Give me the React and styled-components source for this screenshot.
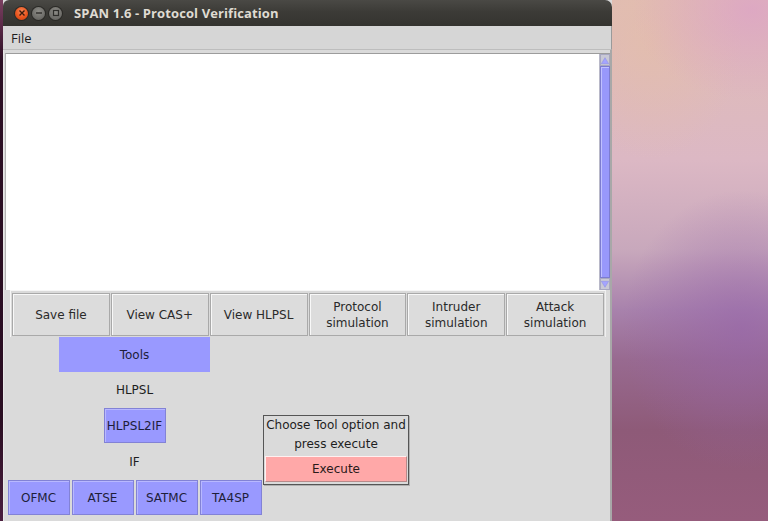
import React from "react";
import styled, { createGlobalStyle } from "styled-components";

const GlobalStyle = createGlobalStyle`
  html, body {
    margin: 0;
    padding: 0;
    background: #2c0f24;
  }
  * {
    box-sizing: border-box;
  }
`;

function TitleButton(props) {
  return (
    <CircleButton kind={props.kind}>
      <svg width="8" height="8" viewBox="0 0 8 8">
        {props.kind === "close" && (
          <path d="M1.5 1.5 L6.5 6.5 M6.5 1.5 L1.5 6.5" stroke="#3a1a0c" strokeWidth="1.4" />
        )}
        {props.kind === "min" && (
          <path d="M1 4 H7" stroke="#2e2d2a" strokeWidth="1.4" />
        )}
        {props.kind === "max" && (
          <rect x="1.5" y="1.5" width="5" height="5" fill="none" stroke="#2e2d2a" strokeWidth="1.2" />
        )}
      </svg>
    </CircleButton>
  );
}

function ScrollArrow(props) {
  return (
    <ArrowBox>
      <svg width="10" height="9" viewBox="0 0 10 9">
        {props.up ? (
          <path d="M5 1 L9.5 8.5 H0.5 Z" fill="#a4a4ff" stroke="#8a8ae0" strokeWidth="0.6" />
        ) : (
          <path d="M5 8 L9.5 0.5 H0.5 Z" fill="#a4a4ff" stroke="#8a8ae0" strokeWidth="0.6" />
        )}
      </svg>
    </ArrowBox>
  );
}

const tabs = [
  ["Save file"],
  ["View CAS+"],
  ["View HLPSL"],
  ["Protocol", "simulation"],
  ["Intruder", "simulation"],
  ["Attack", "simulation"],
];

const backends = ["OFMC", "ATSE", "SATMC", "TA4SP"];

export default function App() {
  return (
    <Page>
      <GlobalStyle />
      <LeftEdge />
      <Window>
        <TitleBar>
          <TitleButtons>
            <TitleButton kind="close" />
            <TitleButton kind="min" />
            <TitleButton kind="max" />
          </TitleButtons>
          <TitleText>SPAN 1.6 - Protocol Verification</TitleText>
        </TitleBar>
        <MenuBar>
          <MenuItem>File</MenuItem>
        </MenuBar>
        <Body>
          <Editor>
            <TextArea />
            <ScrollBar>
              <ScrollArrow up />
              <Thumb />
              <ScrollArrow />
            </ScrollBar>
          </Editor>
          <TabRow>
            {tabs.map((lines) => (
              <TabButton key={lines.join(" ")}>
                {lines.map((l) => (
                  <span key={l}>{l}</span>
                ))}
              </TabButton>
            ))}
          </TabRow>
          <Lower>
            <ToolColumn>
              <ToolsBox>Tools</ToolsBox>
              <Label height={36}>HLPSL</Label>
              <ToolButton>HLPSL2IF</ToolButton>
              <Label height={37}>IF</Label>
              <BackendRow>
                {backends.map((b) => (
                  <ToolButton key={b}>{b}</ToolButton>
                ))}
              </BackendRow>
            </ToolColumn>
            <InfoBox>
              <InfoLine>Choose Tool option and</InfoLine>
              <InfoLine>press execute</InfoLine>
              <ExecuteButton>Execute</ExecuteButton>
            </InfoBox>
          </Lower>
        </Body>
      </Window>
      <Desktop />
    </Page>
  );
}

const Page = styled.div`
  display: flex;
  width: 768px;
  height: 521px;
  overflow: hidden;
  font-family: "DejaVu Sans", "Liberation Sans", sans-serif;
  font-size: 12px;
  color: #222;
`;

const LeftEdge = styled.div`
  width: 3px;
  flex: none;
  background: linear-gradient(180deg, #7a4060 0px, #5a2a48 26px, #2c0f24 60px, #2a0e22 420px, #4a1e3e 521px);
`;

const Window = styled.div`
  width: 609px;
  flex: none;
  display: flex;
  flex-direction: column;
  background: #dadada;
`;

const TitleBar = styled.div`
  height: 26px;
  display: flex;
  align-items: center;
  padding-left: 12px;
  background: linear-gradient(180deg, #4a4945 0%, #3c3b37 45%, #34332f 100%);
  border-radius: 6px 7px 0 0;
`;

const TitleButtons = styled.div`
  display: flex;
  gap: 4px;
  margin-right: 12px;
`;

const CircleButton = styled.span`
  width: 13px;
  height: 13px;
  border-radius: 50%;
  display: flex;
  align-items: center;
  justify-content: center;
  background: ${(p) =>
    p.kind === "close"
      ? "radial-gradient(circle at 50% 35%, #f78a5a 0%, #e9541d 55%, #c5400f 100%)"
      : "radial-gradient(circle at 50% 35%, #8d8c87 0%, #6f6e6a 60%, #5a5955 100%)"};
  box-shadow: 0 0 0 1px #2a2926;
`;

const TitleText = styled.span`
  font-family: "Open Sans", "Liberation Sans", sans-serif;
  font-weight: 700;
  font-size: 13px;
  color: #dfdbd2;
  letter-spacing: 0.1px;
`;

const MenuBar = styled.div`
  height: 24px;
  display: flex;
  align-items: center;
  padding-left: 8px;
  background: #d6d6d6;
  border-bottom: 1px solid #bdbdbd;
  border-right: 1px solid #9a9a9a;
`;

const MenuItem = styled.span`
  font-family: "Open Sans", "DejaVu Sans", sans-serif;
  font-size: 13px;
  color: #1e1e1e;
`;

const Body = styled.div`
  flex: 1;
  display: flex;
  flex-direction: column;
  border-right: 2px solid #a8a8a8;
  border-left: 1px solid #e8e8e8;
`;

const Editor = styled.div`
  display: flex;
  height: 237px;
  margin: 3px 0 0 1px;
  border-top: 1px solid #9c9c9c;
  border-left: 1px solid #b4b4b4;
`;

const TextArea = styled.div`
  flex: 1;
  background: #ffffff;
`;

const ScrollBar = styled.div`
  width: 11px;
  display: flex;
  flex-direction: column;
  background: #c8c8d4;
  border-left: 1px solid #b8b8c8;
`;

const ArrowBox = styled.div`
  height: 12px;
  display: flex;
  align-items: center;
  justify-content: center;
  background: #c9c9d6;
  border: 1px solid #a8a8c0;
`;

const Thumb = styled.div`
  flex: 1;
  background: #9898fb;
  border: 1px solid #7c7cd0;
  box-shadow: inset 1px 1px 0 #c0c0ff;
`;

const TabRow = styled.div`
  display: grid;
  grid-template-columns: repeat(6, 1fr);
  gap: 1px;
  margin: 0 4px 0 6px;
  padding: 2px 1px 1px 1px;
  border-top: 1px solid #f6f6f6;
  border-left: 1px solid #f6f6f6;
  border-right: 1px solid #f0f0f0;
`;

const TabButton = styled.div`
  height: 43px;
  display: flex;
  flex-direction: column;
  align-items: center;
  justify-content: center;
  line-height: 16px;
  background: #dcdcdc;
  border: 1px solid #a9a9a9;
  box-shadow: inset 1px 1px 0 #f8f8f8;
  color: #2a2a2a;
`;

const Lower = styled.div`
  display: flex;
  align-items: flex-start;
  padding-left: 3px;
`;

const ToolColumn = styled.div`
  width: 255px;
  display: flex;
  flex-direction: column;
  align-items: center;
`;

const ToolsBox = styled.div`
  width: 151px;
  height: 35px;
  display: flex;
  align-items: center;
  justify-content: center;
  background: #9999ff;
  color: #1e1e3a;
`;

const Label = styled.div`
  height: ${(p) => p.height}px;
  display: flex;
  align-items: center;
  justify-content: center;
  color: #1e1e1e;
`;

const ToolButton = styled.div`
  width: 62px;
  height: 35px;
  display: flex;
  align-items: center;
  justify-content: center;
  background: #9999ff;
  border: 1px solid #8282d6;
  box-shadow: inset 1px 1px 0 #b8b8ff;
  color: #1e1e3a;
`;

const BackendRow = styled.div`
  display: flex;
  gap: 2px;
`;

const InfoBox = styled.div`
  width: 146px;
  height: 70px;
  margin-top: 78px;
  margin-left: 1px;
  display: flex;
  flex-direction: column;
  align-items: center;
  padding: 0 1px;
  border: 1px solid #555555;
  box-shadow: 1px 1px 0 #b0b0b0;
`;

const InfoLine = styled.div`
  height: 19px;
  line-height: 19px;
  white-space: nowrap;
  color: #1e1e1e;
`;

const ExecuteButton = styled.div`
  width: 142px;
  height: 26px;
  margin-top: 2px;
  display: flex;
  align-items: center;
  justify-content: center;
  background: #ffa8a8;
  border-top: 1px solid #fff0f0;
  border-left: 1px solid #fff0f0;
  border-right: 1px solid #b88a8a;
  border-bottom: 1px solid #b88a8a;
  color: #2a1a1a;
`;

const Desktop = styled.div`
  flex: 1;
  background:
    radial-gradient(ellipse 120px 90px at 140px 10px, rgba(220, 160, 200, 0.7), transparent),
    radial-gradient(ellipse 90px 120px at 40px 40px, rgba(228, 190, 170, 0.7), transparent),
    radial-gradient(ellipse 120px 140px at 130px 330px, rgba(150, 100, 170, 0.6), transparent),
    linear-gradient(180deg, #e0bcb4 0px, #dcb8c4 160px, #c8a8bc 250px, #a882ac 310px, #986a90 360px, #8e5a78 430px, #965c7c 521px);
`;
